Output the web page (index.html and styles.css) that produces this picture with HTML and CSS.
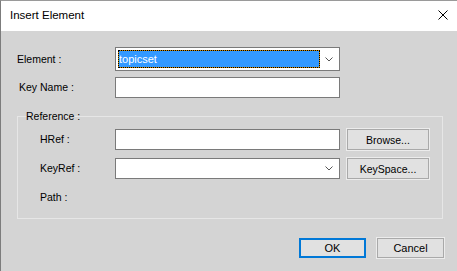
FILE: index.html
```html
<!DOCTYPE html>
<html lang="en">

<head>
    <meta charset="utf-8">
    <title>Insert Element</title>
    <link rel="stylesheet" href="styles.css">
</head>

<body>
    <div class="dialog">
        <!--title bar-->
        <header class="titlebar">
            <span class="title">Insert Element</span>
            <svg class="close" width="10" height="10" viewBox="0 0 10 10">
                <path d="M0.5 0.5 L9.5 9.5 M9.5 0.5 L0.5 9.5" stroke="#000" stroke-width="1" fill="none" />
            </svg>
        </header>

        <main class="content">
            <div class="form">
                <label class="lbl lbl-element">Element :</label>
                <div class="combo combo-tall">
                    <span class="sel">topicset</span>
                    <svg class="chev" width="8" height="5" viewBox="0 0 8 5">
                        <polyline points="0.5,0.5 4,4 7.5,0.5" stroke="#555" fill="none" />
                    </svg>
                </div>
                <label class="lbl lbl-key">Key Name :</label>
                <div class="field"></div>
            </div>

            <!--reference group-->
            <section class="group">
                <div class="legend">Reference :</div>
                <div class="group-rows">
                    <label class="lbl">HRef :</label>
                    <div class="field"></div>
                    <button class="btn">Browse...</button>

                    <label class="lbl">KeyRef :</label>
                    <div class="combo">
                        <svg class="chev" width="8" height="5" viewBox="0 0 8 5">
                            <polyline points="0.5,0.5 4,4 7.5,0.5" stroke="#555" fill="none" />
                        </svg>
                    </div>
                    <button class="btn">KeySpace...</button>

                    <label class="lbl">Path :</label>
                </div>
            </section>

            <footer class="actions">
                <button class="btn btn-main">OK</button>
                <button class="btn">Cancel</button>
            </footer>
        </main>
    </div>
</body>

</html>
```

FILE: styles.css
```css
* {
    box-sizing: border-box;
}

body,
html {
    margin: 0;
    background: #d4d4d4;
    font-family: "Liberation Sans", Arial, sans-serif;
    font-size: 10.5px;
    color: #000;
}

.dialog {
    width: 457px;
    height: 271px;
    border-top: 1px solid #9a9a9a;
    border-left: 1px solid #7c7c7c;
    background: #d4d4d4;
}

/* title bar */

.titlebar {
    height: 30px;
    background: #fff;
    display: flex;
    align-items: center;
    justify-content: space-between;
    padding: 0 9px 2px 9px;
}

.title {
    font-size: 11.5px;
}

/* content */

.content {
    padding: 16px 13px 0 16px;
}

.form {
    display: grid;
    grid-template-columns: 98px 225px;
    grid-template-rows: 24px 21px;
    row-gap: 6px;
    align-items: center;
}

.lbl {
    line-height: 13px;
}

.lbl-key {
    padding-left: 2px;
}

.field,
.combo {
    height: 21px;
    background: #fff;
    border: 1px solid #7a7a7a;
}

.combo {
    display: flex;
    align-items: center;
    justify-content: flex-end;
    padding: 0 6px 0 2px;
}

.combo-tall {
    height: 24px;
    justify-content: space-between;
}

.sel {
    width: 202px;
    height: 18px;
    line-height: 16px;
    font-size: 11px;
    color: #fff;
    border: 1px dotted #000;
    background: linear-gradient(#3399ff, #3399ff) padding-box, #d08a00 border-box;
}

/* reference group */

.group {
    margin-top: 18px;
    width: 426px;
    border: 1px solid #e6e6e6;
    padding: 0 0 10px 22px;
}

.legend {
    margin: -7px 0 0 -14px;
    height: 13px;
    line-height: 13px;
}

.group-rows {
    margin-top: 6px;
    display: grid;
    grid-template-columns: 68px 225px 82px;
    grid-auto-rows: 21px;
    column-gap: 7px;
    row-gap: 8px;
    align-items: center;
}

.group-rows .lbl:last-child {
    margin-top: -1px;
}

.btn {
    height: 21px;
    font-family: inherit;
    font-size: 10.5px;
    color: #000;
    background: #e1e1e1;
    border: 1px solid #a9a9a9;
    box-shadow: 0 0 0 1px #ececec;
    padding: 0;
}

/* bottom buttons */

.actions {
    display: flex;
    justify-content: flex-end;
    gap: 11px;
    margin-top: 19px;
}

.actions .btn {
    width: 67px;
    height: 20px;
    font-size: 11px;
}

.btn-main {
    border: 2px solid #0078d7;
    box-shadow: none;
}
```
